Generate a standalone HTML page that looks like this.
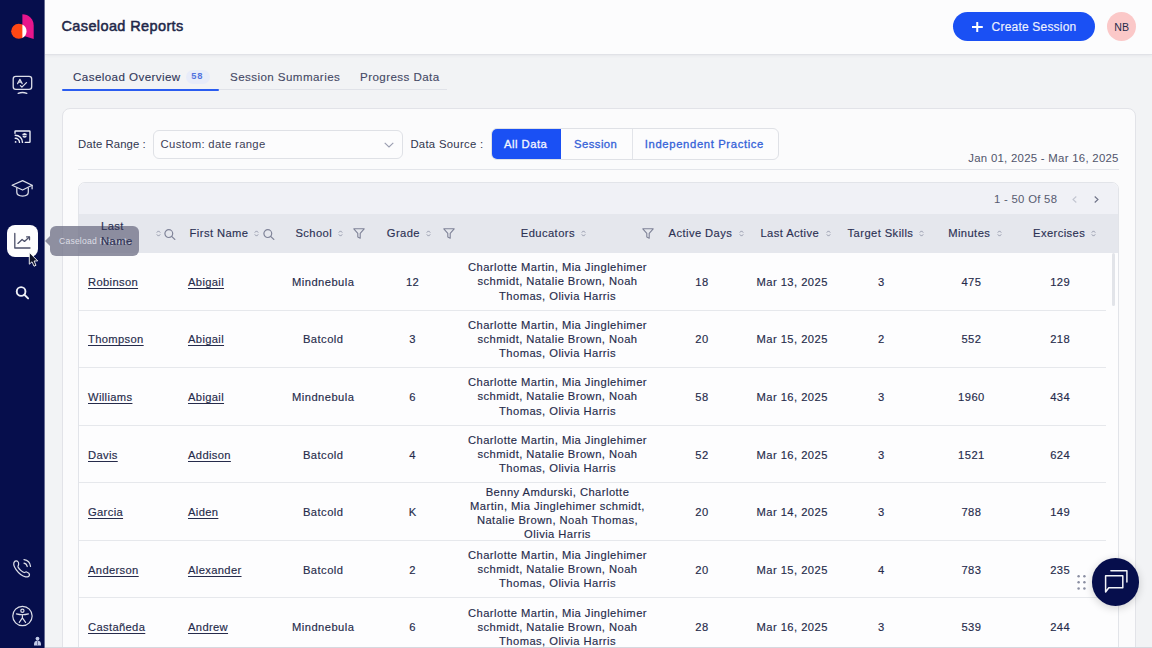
<!DOCTYPE html>
<html><head><meta charset="utf-8">
<style>
*{margin:0;padding:0;box-sizing:border-box}
html,body{width:1152px;height:648px;overflow:hidden;background:#f2f3f5;font-family:"Liberation Sans",sans-serif;color:#262b4b}
.a{position:absolute;white-space:nowrap;line-height:1}
.ico{line-height:0}
.ico svg{display:block}
#sb{position:absolute;left:0;top:0;width:45px;height:648px;background:#060e4c}
#hdr{position:absolute;left:45px;top:0;width:1107px;height:55px;background:#fcfcfd;border-bottom:1.5px solid #e1e2e7;box-shadow:0 1px 3px rgba(20,25,60,.05)}
#title{left:61.5px;top:19.2px;font-size:14.5px;color:#222748;-webkit-text-stroke:.5px #222748;letter-spacing:.38px}
#btn{left:953px;top:12px;width:142px;height:29px;border-radius:15px;background:#1a50f4}
#btntxt{left:991.6px;top:20.6px;font-size:12px;color:#eef1fd;letter-spacing:.2px;-webkit-text-stroke:.15px #eef1fd}
#avatar{left:1107px;top:12px;width:29px;height:29px;border-radius:50%;background:#fbc8c8}
#nb{left:1114.3px;top:21.5px;font-size:10.6px;color:#262b4b}
.tab{font-size:11.6px;top:71.3px;color:#454965;letter-spacing:.42px;-webkit-text-stroke:.12px currentColor}
#badge{left:185.5px;top:70px;width:24px;height:14px;border-radius:7px;background:#e8ecf9}
#badgetxt{left:191.3px;top:72px;font-size:9.3px;font-weight:bold;color:#5273de;letter-spacing:.9px}
#tabline{left:62px;top:89px;width:385px;height:1px;background:#e0e2e8}
#tabact{left:62px;top:88.5px;width:157px;height:2px;background:#2a5cf0;border-radius:1px}
#card{position:absolute;left:61.5px;top:107.5px;width:1074px;height:560px;background:#fbfbfc;border:1px solid #e2e3e8;border-radius:8px}
.lbl{font-size:11.3px;color:#30354f;letter-spacing:.1px;top:138.5px}
#sel{left:153px;top:129.5px;width:250px;height:29px;border:1px solid #dfe1e6;border-radius:6px;background:#fcfcfd}
#seltxt{left:160.6px;top:138.5px;font-size:11.3px;color:#3c4058;letter-spacing:.32px}
#seg{left:490.5px;top:128px;width:288.5px;height:32px;border:1px solid #dfe1e6;border-radius:6px;background:#fcfcfd;overflow:hidden}
#segact{position:absolute;left:0;top:0;width:69px;height:100%;background:#1a50f4}
#segdiv{position:absolute;left:140px;top:0;width:1px;height:100%;background:#e2e4e9}
.segt{font-size:11.3px;top:138.7px;letter-spacing:.45px;color:#3562d8;-webkit-text-stroke:.3px currentColor}
#daterange{left:968.3px;top:152.8px;font-size:11.4px;color:#50546b;letter-spacing:.27px}
#fsep{left:78px;top:169px;width:1041px;height:1px;background:#e3e5ea}
#tbl{position:absolute;left:78px;top:182px;width:1041px;height:480px;border:1px solid #e2e4e9;border-radius:7px;background:#fdfdfe;overflow:hidden}
#pbar{position:absolute;left:0;top:0;width:100%;height:31px;background:#f0f1f6}
#thead{position:absolute;left:0;top:31px;width:100%;height:38.6px;background:#e5e7ed}
#pagetxt{left:994px;top:193.5px;font-size:11.3px;color:#575b70;letter-spacing:.3px}
.th{font-size:11.2px;color:#2c3154;-webkit-text-stroke:.15px #2c3154;letter-spacing:.42px}
.td{font-size:11.2px;color:#262b4b;letter-spacing:.45px;-webkit-text-stroke:.15px #262b4b}
.ed{line-height:14.2px;text-align:center}
.lnk{text-decoration:underline;text-underline-offset:1.5px;text-decoration-thickness:1px;letter-spacing:.35px}
.sep{position:absolute;left:79px;width:1027px;height:1px;background:#e6e8ec}
.c{transform:translateX(-50%)}
#scroll{left:1112px;top:253px;width:3px;height:53px;background:#e2e4e9;border-radius:2px}
#tip{left:50px;top:226px;width:89px;height:30px;border-radius:6px;background:rgba(120,121,142,.82)}
#tiparrow{left:45px;top:236px;width:0;height:0;border-top:5px solid transparent;border-bottom:5px solid transparent;border-right:5px solid rgba(120,121,142,.82)}
#tiptxt{left:59px;top:237px;font-size:8.6px;color:#dcdde5;letter-spacing:.2px}
#chat{left:1091.5px;top:558.3px;width:47.5px;height:47.5px;border-radius:50%;background:#060e4c;box-shadow:0 2px 8px rgba(0,0,0,.18)}
</style></head><body>
<div id="sb"></div>
<div id="hdr"></div>
<div class="a" id="title">Caseload Reports</div>
<div class="a" id="btn"></div>
<div class="a ico" style="left:972px;top:22.4px"><svg width="10.5" height="10" viewBox="0 0 10.5 10"><path d="M5.25 0.3 V9.7 M0.4 5 H10.1" stroke="#fff" stroke-width="2" stroke-linecap="round"/></svg></div>
<div class="a" id="btntxt">Create Session</div>
<div class="a" id="avatar"></div>
<div class="a" id="nb">NB</div>

<div class="a" id="tabline"></div>
<div class="a" id="tabact"></div>
<div class="a tab" style="left:73px;color:#33385a">Caseload Overview</div>
<div class="a" id="badge"></div>
<div class="a" id="badgetxt">58</div>
<div class="a tab" style="left:230px">Session Summaries</div>
<div class="a tab" style="left:360px">Progress Data</div>

<div id="card"></div>
<div class="a lbl" style="left:78px">Date Range :</div>
<div class="a" id="sel"></div>
<div class="a" id="seltxt">Custom: date range</div>
<div class="a ico" style="left:383.6px;top:141.8px"><svg width="10" height="6" viewBox="0 0 10 6"><path d="M0.7 0.8 L5 5 L9.3 0.8" fill="none" stroke="#9a9db0" stroke-width="1.1"/></svg></div>
<div class="a lbl" style="left:410.4px;letter-spacing:.3px">Data Source :</div>
<div class="a" id="seg"><div id="segact"></div><div id="segdiv"></div></div>
<div class="a segt" style="left:504.1px;color:#f4f6fe">All Data</div>
<div class="a segt" style="left:574px">Session</div>
<div class="a segt" style="left:644.8px;letter-spacing:.62px">Independent Practice</div>
<div class="a" id="daterange">Jan 01, 2025 - Mar 16, 2025</div>
<div class="a" id="fsep"></div>

<div id="tbl"><div id="pbar"></div><div id="thead"></div></div>
<div class="a" id="pagetxt">1 - 50 Of 58</div>
<div class="a ico" style="left:1071.5px;top:195.8px"><svg width="5" height="7" viewBox="0 0 5 7"><path d="M4.3 0.5 L1 3.5 L4.3 6.5" fill="none" stroke="#c3c6d1" stroke-width="1.1"/></svg></div>
<div class="a ico" style="left:1093.5px;top:195.8px"><svg width="5" height="7" viewBox="0 0 5 7"><path d="M0.7 0.5 L4 3.5 L0.7 6.5" fill="none" stroke="#6f7388" stroke-width="1.1"/></svg></div>
<div class="a" id="tip"></div>
<div class="a" id="tiparrow"></div>
<div class="a" id="tiptxt">Caseload Reports</div>
<div class="a th" style="left:189.6px;top:227.92px">First Name</div>
<div class="a th" style="left:295.4px;top:227.92px">School</div>
<div class="a th" style="left:386.8px;top:227.92px">Grade</div>
<div class="a th" style="left:520.8px;top:227.92px">Educators</div>
<div class="a th" style="left:668.6px;top:227.92px">Active Days</div>
<div class="a th" style="left:760.4px;top:227.92px">Last Active</div>
<div class="a th" style="left:847.6px;top:227.92px">Target Skills</div>
<div class="a th" style="left:948.2px;top:227.92px">Minutes</div>
<div class="a th" style="left:1033px;top:227.92px">Exercises</div>
<div class="a th" style="left:101px;top:220.82px;line-height:14.3px;top:219.27px;white-space:normal;width:40px">Last<br>Name</div>
<div class="a ico" style="left:156px;top:230px"><svg width="5" height="7" viewBox="0 0 5 7"><path d="M0.8 2.6 L2.5 0.9 L4.2 2.6 M0.8 4.4 L2.5 6.1 L4.2 4.4" fill="none" stroke="#8a8ea3" stroke-width="0.9"/></svg></div>
<div class="a ico" style="left:253.9px;top:230px"><svg width="5" height="7" viewBox="0 0 5 7"><path d="M0.8 2.6 L2.5 0.9 L4.2 2.6 M0.8 4.4 L2.5 6.1 L4.2 4.4" fill="none" stroke="#8a8ea3" stroke-width="0.9"/></svg></div>
<div class="a ico" style="left:338.1px;top:230px"><svg width="5" height="7" viewBox="0 0 5 7"><path d="M0.8 2.6 L2.5 0.9 L4.2 2.6 M0.8 4.4 L2.5 6.1 L4.2 4.4" fill="none" stroke="#8a8ea3" stroke-width="0.9"/></svg></div>
<div class="a ico" style="left:425.6px;top:230px"><svg width="5" height="7" viewBox="0 0 5 7"><path d="M0.8 2.6 L2.5 0.9 L4.2 2.6 M0.8 4.4 L2.5 6.1 L4.2 4.4" fill="none" stroke="#8a8ea3" stroke-width="0.9"/></svg></div>
<div class="a ico" style="left:581.25px;top:230px"><svg width="5" height="7" viewBox="0 0 5 7"><path d="M0.8 2.6 L2.5 0.9 L4.2 2.6 M0.8 4.4 L2.5 6.1 L4.2 4.4" fill="none" stroke="#8a8ea3" stroke-width="0.9"/></svg></div>
<div class="a ico" style="left:738.9px;top:230px"><svg width="5" height="7" viewBox="0 0 5 7"><path d="M0.8 2.6 L2.5 0.9 L4.2 2.6 M0.8 4.4 L2.5 6.1 L4.2 4.4" fill="none" stroke="#8a8ea3" stroke-width="0.9"/></svg></div>
<div class="a ico" style="left:826.4px;top:230px"><svg width="5" height="7" viewBox="0 0 5 7"><path d="M0.8 2.6 L2.5 0.9 L4.2 2.6 M0.8 4.4 L2.5 6.1 L4.2 4.4" fill="none" stroke="#8a8ea3" stroke-width="0.9"/></svg></div>
<div class="a ico" style="left:919px;top:230px"><svg width="5" height="7" viewBox="0 0 5 7"><path d="M0.8 2.6 L2.5 0.9 L4.2 2.6 M0.8 4.4 L2.5 6.1 L4.2 4.4" fill="none" stroke="#8a8ea3" stroke-width="0.9"/></svg></div>
<div class="a ico" style="left:996.5px;top:230px"><svg width="5" height="7" viewBox="0 0 5 7"><path d="M0.8 2.6 L2.5 0.9 L4.2 2.6 M0.8 4.4 L2.5 6.1 L4.2 4.4" fill="none" stroke="#8a8ea3" stroke-width="0.9"/></svg></div>
<div class="a ico" style="left:1091.2px;top:230px"><svg width="5" height="7" viewBox="0 0 5 7"><path d="M0.8 2.6 L2.5 0.9 L4.2 2.6 M0.8 4.4 L2.5 6.1 L4.2 4.4" fill="none" stroke="#8a8ea3" stroke-width="0.9"/></svg></div>
<div class="a ico" style="left:163.5px;top:229px"><svg width="12" height="11" viewBox="0 0 12 11"><circle cx="4.8" cy="4.6" r="3.9" fill="none" stroke="#7f8398" stroke-width="1.2"/><path d="M7.6 7.4 L10.8 10.4" stroke="#7f8398" stroke-width="1.3" stroke-linecap="round"/></svg></div>
<div class="a ico" style="left:263px;top:229px"><svg width="12" height="11" viewBox="0 0 12 11"><circle cx="4.8" cy="4.6" r="3.9" fill="none" stroke="#7f8398" stroke-width="1.2"/><path d="M7.6 7.4 L10.8 10.4" stroke="#7f8398" stroke-width="1.3" stroke-linecap="round"/></svg></div>
<div class="a ico" style="left:352.7px;top:228px"><svg width="12" height="11" viewBox="0 0 12 11"><path d="M0.8 0.8 H11.2 L7.2 5.4 V10.2 L4.8 9.1 V5.4 Z" fill="none" stroke="#7f8398" stroke-width="1.1" stroke-linejoin="round"/></svg></div>
<div class="a ico" style="left:442.5px;top:228px"><svg width="12" height="11" viewBox="0 0 12 11"><path d="M0.8 0.8 H11.2 L7.2 5.4 V10.2 L4.8 9.1 V5.4 Z" fill="none" stroke="#7f8398" stroke-width="1.1" stroke-linejoin="round"/></svg></div>
<div class="a ico" style="left:642.2px;top:228px"><svg width="12" height="11" viewBox="0 0 12 11"><path d="M0.8 0.8 H11.2 L7.2 5.4 V10.2 L4.8 9.1 V5.4 Z" fill="none" stroke="#7f8398" stroke-width="1.1" stroke-linejoin="round"/></svg></div>
<div class="a td lnk" style="left:88px;top:276.90px">Robinson</div>
<div class="a td lnk" style="left:188px;top:276.90px">Abigail</div>
<div class="a td c" style="left:323.2px;top:276.90px">Mindnebula</div>
<div class="a td c" style="left:412.6px;top:276.90px">12</div>
<div class="a td c" style="left:702px;top:276.90px">18</div>
<div class="a td c" style="left:792.2px;top:276.90px">Mar 13, 2025</div>
<div class="a td c" style="left:881.3px;top:276.90px">3</div>
<div class="a td c" style="left:971.4px;top:276.90px">475</div>
<div class="a td c" style="left:1060.2px;top:276.90px">129</div>
<div class="a td c ed" style="left:557.5px;top:260.15px">Charlotte Martin, Mia Jinglehimer<br>schmidt, Natalie Brown, Noah<br>Thomas, Olivia Harris</div>
<div class="sep" style="top:309.5px"></div>
<div class="a td lnk" style="left:88px;top:334.46px">Thompson</div>
<div class="a td lnk" style="left:188px;top:334.46px">Abigail</div>
<div class="a td c" style="left:323.2px;top:334.46px">Batcold</div>
<div class="a td c" style="left:412.6px;top:334.46px">3</div>
<div class="a td c" style="left:702px;top:334.46px">20</div>
<div class="a td c" style="left:792.2px;top:334.46px">Mar 15, 2025</div>
<div class="a td c" style="left:881.3px;top:334.46px">2</div>
<div class="a td c" style="left:971.4px;top:334.46px">552</div>
<div class="a td c" style="left:1060.2px;top:334.46px">218</div>
<div class="a td c ed" style="left:557.5px;top:317.71px">Charlotte Martin, Mia Jinglehimer<br>schmidt, Natalie Brown, Noah<br>Thomas, Olivia Harris</div>
<div class="sep" style="top:367.0px"></div>
<div class="a td lnk" style="left:88px;top:392.02px">Williams</div>
<div class="a td lnk" style="left:188px;top:392.02px">Abigail</div>
<div class="a td c" style="left:323.2px;top:392.02px">Mindnebula</div>
<div class="a td c" style="left:412.6px;top:392.02px">6</div>
<div class="a td c" style="left:702px;top:392.02px">58</div>
<div class="a td c" style="left:792.2px;top:392.02px">Mar 16, 2025</div>
<div class="a td c" style="left:881.3px;top:392.02px">3</div>
<div class="a td c" style="left:971.4px;top:392.02px">1960</div>
<div class="a td c" style="left:1060.2px;top:392.02px">434</div>
<div class="a td c ed" style="left:557.5px;top:375.27px">Charlotte Martin, Mia Jinglehimer<br>schmidt, Natalie Brown, Noah<br>Thomas, Olivia Harris</div>
<div class="sep" style="top:424.6px"></div>
<div class="a td lnk" style="left:88px;top:449.58px">Davis</div>
<div class="a td lnk" style="left:188px;top:449.58px">Addison</div>
<div class="a td c" style="left:323.2px;top:449.58px">Batcold</div>
<div class="a td c" style="left:412.6px;top:449.58px">4</div>
<div class="a td c" style="left:702px;top:449.58px">52</div>
<div class="a td c" style="left:792.2px;top:449.58px">Mar 16, 2025</div>
<div class="a td c" style="left:881.3px;top:449.58px">3</div>
<div class="a td c" style="left:971.4px;top:449.58px">1521</div>
<div class="a td c" style="left:1060.2px;top:449.58px">624</div>
<div class="a td c ed" style="left:557.5px;top:432.83px">Charlotte Martin, Mia Jinglehimer<br>schmidt, Natalie Brown, Noah<br>Thomas, Olivia Harris</div>
<div class="sep" style="top:482.1px"></div>
<div class="a td lnk" style="left:88px;top:507.14px">Garcia</div>
<div class="a td lnk" style="left:188px;top:507.14px">Aiden</div>
<div class="a td c" style="left:323.2px;top:507.14px">Batcold</div>
<div class="a td c" style="left:412.6px;top:507.14px">K</div>
<div class="a td c" style="left:702px;top:507.14px">20</div>
<div class="a td c" style="left:792.2px;top:507.14px">Mar 14, 2025</div>
<div class="a td c" style="left:881.3px;top:507.14px">3</div>
<div class="a td c" style="left:971.4px;top:507.14px">788</div>
<div class="a td c" style="left:1060.2px;top:507.14px">149</div>
<div class="a td c ed" style="left:557.5px;top:484.59px">Benny Amdurski, Charlotte<br>Martin, Mia Jinglehimer schmidt,<br>Natalie Brown, Noah Thomas,<br>Olivia Harris</div>
<div class="sep" style="top:539.7px"></div>
<div class="a td lnk" style="left:88px;top:564.70px">Anderson</div>
<div class="a td lnk" style="left:188px;top:564.70px">Alexander</div>
<div class="a td c" style="left:323.2px;top:564.70px">Batcold</div>
<div class="a td c" style="left:412.6px;top:564.70px">2</div>
<div class="a td c" style="left:702px;top:564.70px">20</div>
<div class="a td c" style="left:792.2px;top:564.70px">Mar 15, 2025</div>
<div class="a td c" style="left:881.3px;top:564.70px">4</div>
<div class="a td c" style="left:971.4px;top:564.70px">783</div>
<div class="a td c" style="left:1060.2px;top:564.70px">235</div>
<div class="a td c ed" style="left:557.5px;top:547.95px">Charlotte Martin, Mia Jinglehimer<br>schmidt, Natalie Brown, Noah<br>Thomas, Olivia Harris</div>
<div class="sep" style="top:597.3px"></div>
<div class="a td lnk" style="left:88px;top:622.26px">Casta&ntilde;eda</div>
<div class="a td lnk" style="left:188px;top:622.26px">Andrew</div>
<div class="a td c" style="left:323.2px;top:622.26px">Mindnebula</div>
<div class="a td c" style="left:412.6px;top:622.26px">6</div>
<div class="a td c" style="left:702px;top:622.26px">28</div>
<div class="a td c" style="left:792.2px;top:622.26px">Mar 16, 2025</div>
<div class="a td c" style="left:881.3px;top:622.26px">3</div>
<div class="a td c" style="left:971.4px;top:622.26px">539</div>
<div class="a td c" style="left:1060.2px;top:622.26px">244</div>
<div class="a td c ed" style="left:557.5px;top:605.51px">Charlotte Martin, Mia Jinglehimer<br>schmidt, Natalie Brown, Noah<br>Thomas, Olivia Harris</div>
<div class="a" id="scroll"></div>

<!-- sidebar icons -->
<div class="a" style="left:6.6px;top:224.6px;width:31.8px;height:32.2px;border-radius:8px;background:#fdfdfe"></div>
<div class="a ico" style="left:0;top:0"><svg width="45" height="648" viewBox="0 0 45 648">
  <path d="M22.4 14.2 A11.3 11.3 0 0 1 33.7 25.5 V39 L22.4 35.5 Z" fill="#e8168c"/>
  <circle cx="18.75" cy="31.25" r="7.6" fill="#ff4714"/>
  <path d="M22.4 24.5 A7.6 7.6 0 0 1 22.4 38 Z" fill="#fff"/>
  <g fill="none" stroke="#dcdee8" stroke-width="1.3" stroke-linecap="round" stroke-linejoin="round">
    <rect x="13.2" y="76.4" width="18.5" height="12.9" rx="2.6"/>
    <path d="M18.2 93.4 Q22.5 91.6 26.8 93.4"/>
    <path d="M17.6 83.6 L19.9 79.4 L22.2 83.6 M18.5 82.2 H21.3" stroke-width="1.2"/>
    <path d="M20.4 85.6 L21.9 87.1 L26.5 82.6"/>
  </g>
  <g fill="none" stroke="#eceef6" stroke-width="1.4" stroke-linecap="round" stroke-linejoin="round">
    <path d="M15 133.2 V131.6 Q15 131 15.6 131 H29.4 Q30 131 30 131.6 V141.8 Q30 142.4 29.4 142.4 H25.3"/>
    <path d="M15.2 138.2 A4.3 4.3 0 0 1 19.5 142.4"/>
    <path d="M15.2 135.2 A7.3 7.3 0 0 1 22.5 142.4"/>
  </g>
  <circle cx="15.6" cy="141.9" r="0.9" fill="#eceef6"/>
  <path d="M24.6 132.9 L27.5 134.2 L24.6 135.5 L21.7 134.2 Z M22.7 135.3 V137 Q24.6 138.6 26.5 137 V135.3 L24.6 136.2 Z" fill="#eceef6"/>
  <g fill="none" stroke="#dcdee8" stroke-width="1.25" stroke-linecap="round" stroke-linejoin="round">
    <path d="M22.6 180.6 L32.1 185.3 L22.6 190 L12.1 185.3 Z"/>
    <path d="M32.1 185.3 V188.8"/>
    <path d="M16.8 188 V192.3 Q16.8 196 22.6 196 Q28.3 196 28.3 192.3 V188"/>
  </g>
  <g fill="none" stroke="#4b4f69" stroke-width="1.3" stroke-linecap="round" stroke-linejoin="round">
    <path d="M14.8 233.4 V248 H30"/>
    <path d="M17.9 243.4 L22.1 239.5 L24.5 241.4 L29.3 237.1"/>
    <path d="M26.6 236.9 H29.5 V239.8"/>
  </g>
  <path d="M29.3 252.4 L29.3 264.2 L32 261.8 L34 266.2 L36 265.3 L34.1 261 L37.7 260.9 Z" fill="#0d1026" stroke="#fff" stroke-width="0.9" stroke-linejoin="round"/>
  <g fill="none" stroke="#eef0f7" stroke-width="1.9" stroke-linecap="round">
    <circle cx="21.1" cy="291.5" r="4.35"/>
    <path d="M24.4 294.8 L28.1 298.4"/>
  </g>
  <g fill="none" stroke="#dcdee8" stroke-width="1.25" stroke-linecap="round" stroke-linejoin="round">
    <path d="M17.9 561.6 C17 560.6 15.4 560.5 14.6 561.5 C13.4 562.9 13.7 566.2 16.1 569.6 C18.6 573.1 22.1 576.1 25.6 576.8 C27.6 577.2 29.4 576.4 29.5 575 C29.6 573.6 28.2 572.5 26.6 572 C25.6 571.8 24.9 572.5 24.1 572.5 C22.1 572.1 19.1 569.1 18.1 567.1 C17.7 566.1 18.5 565.5 18.6 564.5 C18.7 563.3 18.8 562.4 17.9 561.6 Z"/>
    <path d="M24 563.1 A4.2 4.2 0 0 1 27.2 566.5"/>
    <path d="M24 559.7 A7.6 7.6 0 0 1 30.5 566.4"/>
  </g>
  <g fill="none" stroke="#dcdee8" stroke-width="1.2" stroke-linecap="round" stroke-linejoin="round">
    <circle cx="22.45" cy="616" r="9.7"/>
    <circle cx="22.4" cy="610.8" r="1.6"/>
    <path d="M16.4 613.9 Q22.4 615.6 28.4 613.9"/>
    <path d="M22.4 614.9 V617.8 L19.3 622.4 M22.4 617.8 L25.6 622.4"/>
  </g>
  <g fill="#c3cbe8">
    <circle cx="37.5" cy="638.6" r="1.9"/>
    <path d="M34 645.6 Q33.6 640.8 37.5 640.6 Q41.4 640.8 41 645.6 Z"/>
  </g>
  <path d="M37.5 641 V645.6" stroke="#5a6090" stroke-width="0.8"/>
</svg></div>
<div class="a" style="left:44.2px;top:0;width:1px;height:648px;background:#c9ccd9;opacity:.5"></div>


<div class="a ico" style="left:1076px;top:574px"><svg width="11" height="17" viewBox="0 0 11 17" fill="#8a8ea2">
<circle cx="2.6" cy="2.2" r="1.25"/><circle cx="8.4" cy="2.2" r="1.25"/>
<circle cx="2.6" cy="8.3" r="1.25"/><circle cx="8.4" cy="8.3" r="1.25"/>
<circle cx="2.6" cy="14.4" r="1.25"/><circle cx="8.4" cy="14.4" r="1.25"/></svg></div>
<div class="a" id="chat"></div>
<div class="a ico" style="left:1091.5px;top:558.3px"><svg width="48" height="48" viewBox="1091.5 558.3 48 48" fill="none" stroke="#f2f3f8" stroke-width="1.5" stroke-linejoin="round" stroke-linecap="round">
<path d="M1110.4 571.1 H1126.4 V582.4"/>
<path d="M1105.1 576.1 H1122.3 V588 H1108.3 L1105.1 592.3 Z"/>
</svg></div>
<div class="a" style="left:45px;top:647px;width:1107px;height:1px;background:#d6d8df"></div>
</body></html>
